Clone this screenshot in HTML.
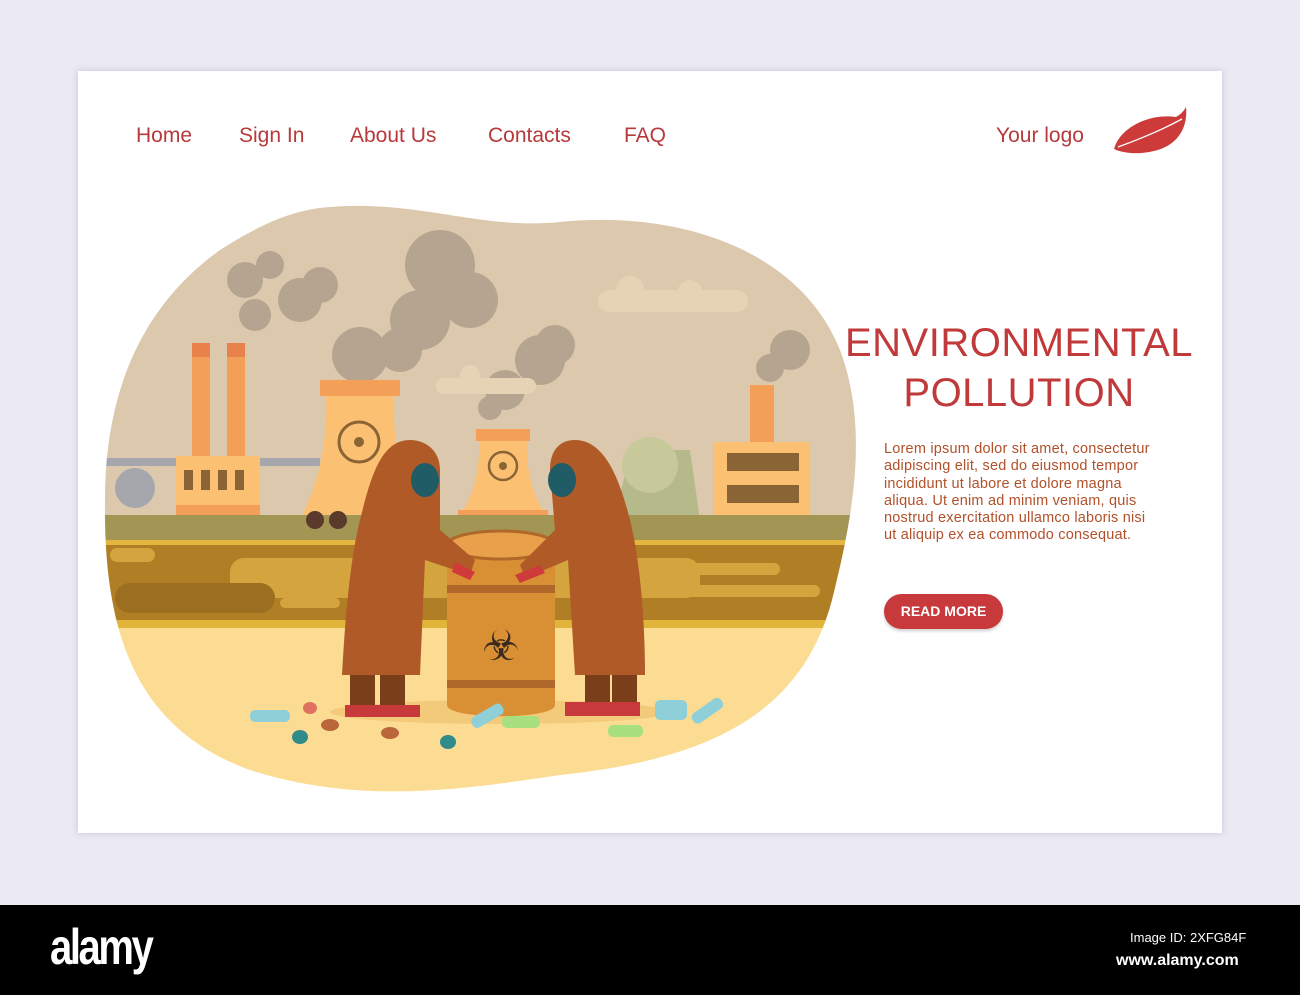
<!DOCTYPE html>
<html><head><meta charset="utf-8"><style>
body{margin:0;width:1300px;height:995px;background:#ebeaf3;font-family:"Liberation Sans",sans-serif;position:relative;overflow:hidden}
.card{position:absolute;left:78px;top:71px;width:1144px;height:762px;background:#fff;box-shadow:0 0 6px rgba(120,120,160,.35)}
.nav{position:absolute;top:124px;font-size:21px;color:#b8393b}
.bar{position:absolute;left:0;top:905px;width:1300px;height:90px;background:#000}
</style></head><body>
<div class="card"></div>
<div class="nav" style="left:136px">Home</div>
<div class="nav" style="left:239px">Sign In</div>
<div class="nav" style="left:350px">About Us</div>
<div class="nav" style="left:488px">Contacts</div>
<div class="nav" style="left:624px">FAQ</div>
<div class="nav" style="left:996px">Your logo</div>
<svg style="position:absolute;left:1110px;top:105px" width="80" height="52" viewBox="0 0 80 52"><path d="M4 44 C10 22 40 8 66 12 C70 10 74 6 76 2 C78 20 70 40 44 46 C28 50 12 48 4 44Z" fill="#cc3a3a"/><path d="M8 42 C30 34 50 26 72 14" stroke="#fff" stroke-width="1.3" fill="none"/></svg>
<div style="position:absolute;left:838px;top:318px;width:362px;text-align:center;color:#c0393b;font-size:40px;line-height:50px;letter-spacing:0.5px">ENVIRONMENTAL<br>POLLUTION</div>
<div style="position:absolute;left:884px;top:441px;width:320px;color:#b2502a;font-size:14.5px;line-height:17.3px;letter-spacing:0.2px;white-space:nowrap">Lorem ipsum dolor sit amet, consectetur<br>adipiscing elit, sed do eiusmod tempor<br>incididunt ut labore et dolore magna<br>aliqua. Ut enim ad minim veniam, quis<br>nostrud exercitation ullamco laboris nisi<br>ut aliquip ex ea commodo consequat.</div>
<div style="position:absolute;left:884px;top:594px;width:119px;height:35px;border-radius:18px;background:#c8393b;color:#fff;font-size:14px;font-weight:bold;line-height:35px;text-align:center;box-shadow:0 2px 3px rgba(0,0,0,.2)">READ MORE</div>
<svg style="position:absolute;left:0;top:0" width="1300" height="905">
<defs><clipPath id="b"><path d="M330 207 C420 200 480 230 560 222 C680 210 800 250 840 350 C870 430 852 520 832 600 C800 720 700 760 560 775 C460 790 360 805 250 770 C140 730 103 640 105 500 C105 380 150 300 220 250 C260 225 290 210 330 207Z"/></clipPath></defs>
<g clip-path="url(#b)">
<rect x="100" y="200" width="760" height="320" fill="#dcc9ad"/>
<g fill="#b5a590"><circle cx="245" cy="280" r="18"/><circle cx="270" cy="265" r="14"/><circle cx="300" cy="300" r="22"/><circle cx="320" cy="285" r="18"/><circle cx="255" cy="315" r="16"/>
<circle cx="440" cy="265" r="35"/><circle cx="470" cy="300" r="28"/><circle cx="420" cy="320" r="30"/><circle cx="360" cy="355" r="28"/><circle cx="400" cy="350" r="22"/>
<circle cx="540" cy="360" r="25"/><circle cx="555" cy="345" r="20"/><circle cx="505" cy="390" r="20"/><circle cx="490" cy="408" r="12"/>
<circle cx="790" cy="350" r="20"/><circle cx="770" cy="368" r="14"/></g>
<g fill="#e6d3b6"><rect x="598" y="290" width="150" height="22" rx="11"/><circle cx="630" cy="290" r="14"/><circle cx="690" cy="292" r="12"/><rect x="436" y="378" width="100" height="16" rx="8"/><circle cx="470" cy="375" r="10"/></g>
<rect x="100" y="458" width="220" height="8" fill="#a6a6ad"/><circle cx="135" cy="488" r="20" fill="#a6a6ad"/>
<rect x="192" y="345" width="18" height="115" fill="#f39f58"/><rect x="227" y="345" width="18" height="115" fill="#f39f58"/><rect x="192" y="343" width="18" height="14" fill="#e8814a"/><rect x="227" y="343" width="18" height="14" fill="#e8814a"/>
<rect x="176" y="456" width="84" height="64" fill="#fcc073"/><rect x="176" y="505" width="84" height="15" fill="#f39f58"/>
<g fill="#8a6435"><rect x="184" y="470" width="9" height="20"/><rect x="201" y="470" width="9" height="20"/><rect x="218" y="470" width="9" height="20"/><rect x="235" y="470" width="9" height="20"/></g>
<path d="M326 395 L394 395 C392 440 400 480 420 520 L300 520 C320 480 328 440 326 395Z" fill="#fcc073"/><rect x="320" y="380" width="80" height="16" fill="#f39f58"/><circle cx="359" cy="442" r="20" fill="none" stroke="#8a6435" stroke-width="3"/><circle cx="359" cy="442" r="5" fill="#8a6435"/>
<path d="M479 440 L527 440 C526 470 532 495 546 515 L460 515 C474 495 480 470 479 440Z" fill="#fcc073"/><rect x="476" y="429" width="54" height="12" fill="#f39f58"/><rect x="458" y="510" width="90" height="10" fill="#f39f58"/><circle cx="503" cy="466" r="14" fill="none" stroke="#8a6435" stroke-width="2.5"/><circle cx="503" cy="466" r="4" fill="#8a6435"/>
<path d="M630 450 L690 450 L700 520 L615 520Z" fill="#b6b98a"/><circle cx="650" cy="465" r="28" fill="#c8c99a"/>
<rect x="750" y="385" width="24" height="60" fill="#f39f58"/><rect x="713" y="442" width="97" height="78" fill="#fcc073"/><rect x="727" y="453" width="72" height="18" fill="#8a6435"/><rect x="727" y="485" width="72" height="18" fill="#8a6435"/>
<rect x="100" y="515" width="760" height="26" fill="#a39553"/><rect x="100" y="540" width="760" height="5" fill="#e3b640"/>
<rect x="100" y="545" width="760" height="78" fill="#b07e24"/>
<g fill="#d4a53e"><rect x="110" y="548" width="45" height="14" rx="7"/><rect x="230" y="558" width="470" height="40" rx="14"/><rect x="660" y="563" width="120" height="12" rx="6"/><rect x="670" y="585" width="150" height="12" rx="6"/><rect x="280" y="598" width="60" height="10" rx="5"/></g>
<rect x="115" y="583" width="160" height="30" rx="15" fill="#9b6e20"/>
<rect x="100" y="620" width="760" height="10" fill="#e0b53a"/>
<rect x="100" y="628" width="760" height="200" fill="#fbdc92"/>
<ellipse cx="500" cy="712" rx="170" ry="12" fill="#f3c97a"/>
<circle cx="315" cy="520" r="9" fill="#5a3a2a"/><circle cx="338" cy="520" r="9" fill="#5a3a2a"/>
<path d="M447 545 L447 705 C447 720 555 720 555 705 L555 545Z" fill="#d98f33"/><ellipse cx="501" cy="545" rx="54" ry="14" fill="#e8a04a" stroke="#b0682a" stroke-width="3"/>
<rect x="447" y="585" width="108" height="8" fill="#b0682a"/><rect x="447" y="680" width="108" height="8" fill="#b0682a"/>
<text x="501" y="660" font-size="42" text-anchor="middle" fill="#3a2a20">☣</text>
<path d="M410 440 C380 440 370 480 360 520 C350 560 345 620 342 675 L420 675 L425 560 L470 575 L475 560 L440 530 L440 470 C440 450 425 440 410 440Z" fill="#b05a28"/>
<path d="M575 440 C605 440 620 480 630 520 C640 560 645 620 645 675 L575 675 L568 560 L525 578 L520 565 L555 530 L550 470 C550 450 560 440 575 440Z" fill="#b05a28"/>
<ellipse cx="425" cy="480" rx="14" ry="17" fill="#1f5c66"/><ellipse cx="562" cy="480" rx="14" ry="17" fill="#1f5c66"/>
<rect x="350" y="675" width="25" height="30" fill="#7b3e1a"/><rect x="380" y="675" width="25" height="30" fill="#7b3e1a"/><rect x="585" y="675" width="25" height="30" fill="#7b3e1a"/><rect x="612" y="675" width="25" height="30" fill="#7b3e1a"/>
<path d="M345 705 h75 v12 h-75z M565 702 h75 v14 h-75z" fill="#c8393b"/>
<path d="M455 562 l20 10 -5 8 -18-8z M515 575 l25 -10 5 8 -25 10z" fill="#cf3b3b"/>
<g fill="#8fd0d8"><rect x="250" y="710" width="40" height="12" rx="5"/><rect x="655" y="700" width="32" height="20" rx="5"/><rect x="690" y="705" width="35" height="12" rx="5" transform="rotate(-35 707 711)"/><rect x="470" y="710" width="35" height="12" rx="5" transform="rotate(-30 487 716)"/></g>
<g fill="#a8e080"><rect x="502" y="716" width="38" height="12" rx="5"/><rect x="608" y="725" width="35" height="12" rx="5"/></g>
<g fill="#2f8c8a"><ellipse cx="300" cy="737" rx="8" ry="7"/><ellipse cx="448" cy="742" rx="8" ry="7"/></g>
<g fill="#b9673a"><ellipse cx="330" cy="725" rx="9" ry="6"/><ellipse cx="390" cy="733" rx="9" ry="6"/><ellipse cx="310" cy="708" rx="7" ry="6" fill="#e07060"/></g>
</g>
</svg>
<div class="bar"></div>
<div style="position:absolute;left:50px;top:918px;color:#fff;font-size:50px;font-weight:bold;letter-spacing:-3px;transform:scaleX(.8);transform-origin:left">alamy</div>
<div style="position:absolute;left:1130px;top:930px;color:#fff;font-size:13px">Image ID: 2XFG84F</div>
<div style="position:absolute;left:1116px;top:952px;color:#fff;font-size:16px;font-weight:bold">www.alamy.com</div>
</body></html>
